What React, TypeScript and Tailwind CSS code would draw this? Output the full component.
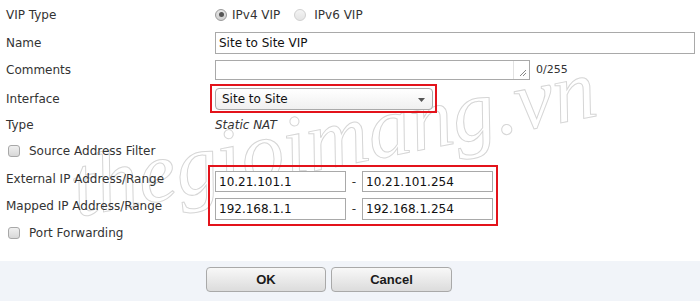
import React from "react";

function Radio({ checked }: { checked?: boolean }) {
  return (
    <span
      className={`w-[12px] h-[12px] rounded-full border flex items-center justify-center shrink-0 ${
        checked ? "border-[#9a9a9a] bg-gradient-to-b from-[#e6e6e6] to-[#cfcfcf]" : "border-[#d0d0d0] bg-gradient-to-b from-[#f4f4f4] to-[#e4e4e4]"
      }`}
    >
      {checked && <span className="w-[5px] h-[5px] rounded-full bg-[#555]" />}
    </span>
  );
}

function Checkbox() {
  return <span className="w-[12px] h-[12px] rounded-[3px] border border-[#a8a8a8] bg-gradient-to-b from-[#f0f0f0] to-[#d8d8d8] shrink-0" />;
}

function TextBox({ value, className }: { value?: string; className: string }) {
  return (
    <div className={`border border-[#a9a9a9] bg-white pl-[3px] flex items-center text-[#111] ${className}`}>
      {value}
    </div>
  );
}

function Btn({ label, width }: { label: string; width: string }) {
  return (
    <button className={`${width} h-[25px] rounded-[4px] border border-[#a9a9a9] bg-gradient-to-b from-[#f8f8f8] to-[#dcdcdc] font-['Liberation_Sans',sans-serif] font-bold text-[13px] text-[#1a1a1a]`}>
      {label}
    </button>
  );
}

export default function App() {
  return (
    <div className="relative w-[700px] h-[301px] overflow-hidden bg-white font-['DejaVu_Sans',sans-serif] text-[12px] text-[#333]">
      {/* watermark */}
      <div className="absolute left-[77px] top-[145px] rotate-[-11deg] origin-[0_72px] pointer-events-none font-['Liberation_Serif',serif] italic text-[86px] leading-none text-transparent [-webkit-text-stroke:1px_#d6d6d6] whitespace-nowrap">
        thegioimang.vn
      </div>

      <div className="relative">
        {/* VIP Type */}
        <div className="flex items-center h-[29px]">
          <div className="w-[215px] pl-[6px]">VIP Type</div>
          <Radio checked />
          <span className="ml-[5px]">IPv4 VIP</span>
          <span className="ml-[14px]"><Radio /></span>
          <span className="ml-[8px]">IPv6 VIP</span>
        </div>

        {/* Name */}
        <div className="flex items-center h-[28px]">
          <div className="w-[215px] pl-[6px]">Name</div>
          <TextBox value="Site to Site VIP" className="w-[480px] h-[22px]" />
        </div>

        {/* Comments */}
        <div className="flex items-center h-[26px]">
          <div className="w-[215px] pl-[6px]">Comments</div>
          <div className="relative w-[315px] h-[20px] border border-[#a9a9a9] bg-white">
            <div className="absolute right-0 top-0 bottom-0 w-[16px] border-l border-[#e2e2e2]" />
            <svg className="absolute right-[2px] bottom-[2px]" width="8" height="8" viewBox="0 0 8 8">
              <path d="M7 1L1 7M7 4L4 7" stroke="#888" strokeWidth="1" />
            </svg>
          </div>
          <span className="ml-[6px] text-[11px]">0/255</span>
        </div>

        {/* Interface */}
        <div className="flex items-center h-[31px]">
          <div className="w-[215px] pl-[6px]">Interface</div>
          <div className="-ml-[5px] w-[227px] h-[29px] border-2 border-[#e3131b] pl-[3px] pr-[2px] flex items-center">
            <div className="relative w-full h-[22px] rounded-[4px] border border-[#aaa] bg-gradient-to-b from-white to-[#f0f0f0] pl-[6px] flex items-center text-[#111]">
              Site to Site
              <svg className="absolute right-[7px] top-[9px]" width="7" height="4" viewBox="0 0 7 4">
                <path d="M0 0H7L3.5 4Z" fill="#555" />
              </svg>
            </div>
          </div>
        </div>

        {/* Type */}
        <div className="flex items-center h-[22px]">
          <div className="w-[215px] pl-[6px]">Type</div>
          <span className="italic">Static NAT</span>
        </div>

        {/* Source Address Filter */}
        <div className="flex items-center h-[29px] pl-[8px] gap-[9px]">
          <Checkbox />
          <span>Source Address Filter</span>
        </div>

        {/* External / Mapped */}
        <div className="flex">
          <div className="w-[215px] pl-[6px] pt-[6px] leading-[16px]">
            <div className="h-[27px]">External IP Address/Range</div>
            <div>Mapped IP Address/Range</div>
          </div>
          <div className="-ml-[7px] w-[290px] h-[61px] border-2 border-[#e3131b] pl-[5px] pr-[3px] pt-[4px] flex flex-col gap-[6px]">
            <div className="flex items-center">
              <TextBox value="10.21.101.1" className="w-[131px] h-[21px]" />
              <span className="w-[16px] text-center">-</span>
              <TextBox value="10.21.101.254" className="w-[131px] h-[21px]" />
            </div>
            <div className="flex items-center">
              <TextBox value="192.168.1.1" className="w-[131px] h-[22px]" />
              <span className="w-[16px] text-center">-</span>
              <TextBox value="192.168.1.254" className="w-[131px] h-[22px]" />
            </div>
          </div>
        </div>

        {/* Port Forwarding */}
        <div className="flex items-center h-[14px] pl-[8px] gap-[9px]">
          <Checkbox />
          <span>Port Forwarding</span>
        </div>
      </div>

      {/* footer */}
      <div className="relative mt-[21px] h-[40px] bg-[#f1f4f9] pl-[206px] pt-[6px] flex gap-[5px] items-start">
        <Btn label="OK" width="w-[120px]" />
        <Btn label="Cancel" width="w-[121px]" />
      </div>
    </div>
  );
}
